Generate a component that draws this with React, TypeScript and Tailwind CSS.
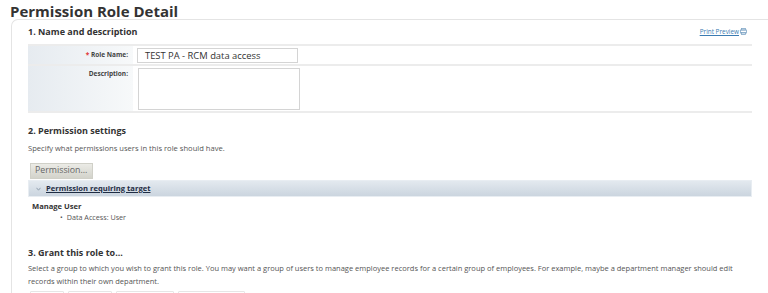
import React from "react";

export default function App() {
  return (
    <div className="w-[768px] h-[293px] overflow-hidden bg-white font-['Open_Sans',sans-serif] text-[#333]">
      <h1 className="h-[19px] pl-[10px] text-[15px] font-bold leading-[22px] text-[#333]">
        Permission Role Detail
      </h1>
      <div className="ml-[11px] border-l border-t border-[#e4e4e4] rounded-tl-[7px] pl-[16px] pr-[16px]">
        {/* section 1 header */}
        <div className="h-[24px] flex items-center justify-between">
          <span className="text-[9px] font-bold text-[#333]">1. Name and description</span>
          <span className="flex items-center mr-[5px] text-[6.4px] text-[#3b7bb1] underline">
            Print Preview
            <svg width="7" height="7" viewBox="0 0 7 7" className="ml-[1px]">
              <rect x="0.5" y="2" width="6" height="3" fill="none" stroke="#7fa6c6" strokeWidth="0.8" />
              <rect x="1.5" y="0.5" width="4" height="1.5" fill="none" stroke="#7fa6c6" strokeWidth="0.8" />
              <rect x="1.5" y="4.5" width="4" height="2" fill="none" stroke="#7fa6c6" strokeWidth="0.8" />
            </svg>
          </span>
        </div>
        {/* table */}
        <div className="border-t-2 border-b-2 border-[#ececec]">
          <div className="flex h-[20px] border-b-2 border-[#ececec]">
            <div className="w-[105px] shrink-0 bg-gradient-to-r from-[#e6ebf0] to-[#f7f9fa] flex justify-end pt-[4px] pr-[5px]">
              <span className="text-[6.5px] font-bold text-[#444] leading-[9px]">
                <span className="text-[#e03030]">* </span>Role Name:
              </span>
            </div>
            <div className="pl-[4px] pt-[2px]">
              <div className="w-[161px] h-[15px] border border-[#d4d4d4] bg-white pl-[7px] text-[9.4px] leading-[13px] text-[#333]">
                TEST PA - RCM data access
              </div>
            </div>
          </div>
          <div className="flex h-[45px]">
            <div className="w-[105px] shrink-0 bg-gradient-to-r from-[#e6ebf0] to-[#f7f9fa] flex justify-end pt-[3px] pr-[5px]">
              <span className="text-[6.5px] font-bold text-[#444] leading-[9px]">Description:</span>
            </div>
            <div className="pl-[5px] pt-[2px]">
              <div className="w-[162px] h-[42px] border border-[#d4d4d4] bg-white"></div>
            </div>
          </div>
        </div>
        {/* section 2 */}
        <div className="mt-[11px] h-[14px] flex items-center text-[9px] font-bold text-[#333]">2. Permission settings</div>
        <div className="mt-[5px] h-[12px] flex items-center text-[7.6px] text-[#555]">
          Specify what permissions users in this role should have.
        </div>
        <div className="mt-[8px] ml-[2px] w-[63px] h-[16px] bg-gradient-to-b from-[#ebebe6] to-[#d3d3cb] border border-[#d0d0c8] flex items-center pl-[4px] text-[8.8px] text-[#666]">
          Permission...
        </div>
        <div className="mt-[1px] h-[17px] border border-[#e8edf2] bg-gradient-to-b from-[#e3e9ef] to-[#cbd5df] flex items-center pl-[7px]">
          <svg width="5" height="4" viewBox="0 0 5 4" className="mr-[5px]">
            <polyline points="0.5,0.8 2.5,3.2 4.5,0.8" fill="none" stroke="#8a98a8" strokeWidth="0.9" />
          </svg>
          <span className="text-[7.6px] font-bold text-[#1f2d44] underline">Permission requiring target</span>
        </div>
        <div className="mt-[5px] ml-[4px] h-[10px] flex items-center text-[7.6px] font-bold text-[#333]">Manage User</div>
        <div className="ml-[32px] h-[10px] flex items-center text-[7.2px] text-[#555]">
          <span className="mr-[4px]">•</span>Data Access: User
        </div>
        {/* section 3 */}
        <div className="mt-[24px] h-[14px] flex items-center text-[9px] font-bold text-[#333]">3. Grant this role to...</div>
        <div className="mt-[2px] text-[7.5px] leading-[13px] text-[#555]">
          Select a group to which you wish to grant this role. You may want a group of users to manage employee records for a certain group of employees. For example, maybe a department manager should edit records within their own department.
        </div>
        <div className="mt-[3px] ml-[2px] flex gap-[4px]">
          <div className="w-[34px] h-[14px] border border-[#e6e6e6] rounded-[1px]"></div>
          <div className="w-[44px] h-[14px] border border-[#e6e6e6] rounded-[1px]"></div>
          <div className="w-[58px] h-[14px] border border-[#e6e6e6] rounded-[1px]"></div>
          <div className="w-[67px] h-[14px] border border-[#e6e6e6] rounded-[1px]"></div>
        </div>
      </div>
    </div>
  );
}
